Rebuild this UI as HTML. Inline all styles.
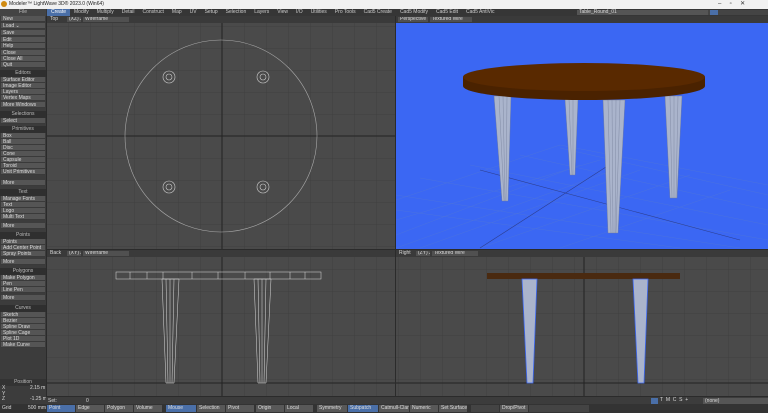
<!DOCTYPE html>
<html><head><meta charset="utf-8"><style>
*{margin:0;padding:0;box-sizing:border-box}
body{width:768px;height:413px;overflow:hidden;background:#2b2b2b;font-family:"Liberation Sans",sans-serif;font-size:5px;color:#d8d8d8;position:relative}
.a{position:absolute}
.t{position:absolute;white-space:nowrap;line-height:7px}
.btn{position:absolute;left:1px;width:44px;height:6px;background:#555;border-bottom:1px solid #3a3a3a;padding-left:2px;line-height:6px;color:#ddd;overflow:hidden;white-space:nowrap}
.hd{position:absolute;left:0;width:46px;height:7px;background:#2f2f2f;text-align:center;line-height:7px;color:#bbb}
.tab{display:inline-block;padding:0 4px;line-height:7px;color:#ccc}
.vh{position:absolute;height:7px;background:#3a3a3a;line-height:7px}
.dd{position:absolute;top:1px;height:5px;background:#505050;line-height:5px;padding-left:2px;overflow:hidden;white-space:nowrap}
.bb{position:absolute;top:405px;height:7px;background:#585858;line-height:7px;padding-left:2px;color:#ddd;overflow:hidden;white-space:nowrap}
</style></head><body>
<div class="a" style="left:0;top:0;width:768px;height:9px;background:#f1f1f1"></div>
<div class="a" style="left:1px;top:1px;width:6px;height:6px;border-radius:3px;background:#d08a10"></div>
<div class="t" style="left:9px;top:1px;color:#222;line-height:7px">Modeler™ LightWave 3D® 2023.0 (Win64)</div>
<div class="t" style="left:718px;top:1px;color:#333;font-size:6px">–&nbsp;&nbsp;&nbsp;&nbsp;&nbsp;▫&nbsp;&nbsp;&nbsp;&nbsp;&nbsp;✕</div>
<div class="a" style="left:0;top:9px;width:768px;height:7px;background:#363636"></div>
<div class="a" style="left:47px;top:9px;width:370px;height:7px;font-size:5px;white-space:nowrap">
<span class="tab" style="background:#4a6fa8;color:#fff">Create</span><span class="tab">Modify</span><span class="tab">Multiply</span><span class="tab">Detail</span><span class="tab">Construct</span><span class="tab">Map</span><span class="tab">UV</span><span class="tab">Setup</span><span class="tab">Selection</span><span class="tab">Layers</span><span class="tab">View</span><span class="tab">I/O</span><span class="tab">Utilities</span><span class="tab">Pro Tools</span><span class="tab">Cad5 Create</span><span class="tab">Cad5 Modify</span><span class="tab">Cad5 Edit</span><span class="tab">Cad5 AntiVic</span></div>
<div class="a" style="left:577px;top:10px;width:140px;height:5px;background:#555;line-height:5px;padding-left:2px">Table_Round_01</div>
<div class="a" style="left:708px;top:10px;width:60px;height:5px;background:#444"></div>
<div class="a" style="left:710px;top:10px;width:8px;height:5px;background:#4a6fa8"></div>
<div class="a" style="left:0;top:9px;width:46px;height:396px;background:#3c3c3c"></div>
<div class="hd" style="top:9px;background:#444">File</div>
<div class="btn" style="top:16px">New</div><div class="btn" style="top:23px">Load ⌄</div><div class="btn" style="top:30px">Save</div><div class="btn" style="top:37px">Edit</div><div class="btn" style="top:43px">Help</div>
<div class="btn" style="top:50px">Close</div><div class="btn" style="top:56px">Close All</div><div class="btn" style="top:62px">Quit</div>
<div class="hd" style="top:70px">Editors</div>
<div class="btn" style="top:77px">Surface Editor</div><div class="btn" style="top:83px">Image Editor</div><div class="btn" style="top:89px">Layers</div><div class="btn" style="top:95px">Vertex Maps</div><div class="btn" style="top:102px">More Windows</div>
<div class="hd" style="top:111px">Selections</div>
<div class="btn" style="top:118px">Select</div>
<div class="hd" style="top:126px">Primitives</div>
<div class="btn" style="top:133px">Box</div><div class="btn" style="top:139px">Ball</div><div class="btn" style="top:145px">Disc</div><div class="btn" style="top:151px">Cone</div><div class="btn" style="top:157px">Capsule</div><div class="btn" style="top:163px">Toroid</div><div class="btn" style="top:169px">Unit Primitives</div><div class="btn" style="top:180px">More</div>
<div class="hd" style="top:189px">Text</div>
<div class="btn" style="top:196px">Manage Fonts</div><div class="btn" style="top:202px">Text</div><div class="btn" style="top:208px">Logo</div><div class="btn" style="top:214px">Multi Text</div><div class="btn" style="top:223px">More</div>
<div class="hd" style="top:232px">Points</div>
<div class="btn" style="top:239px">Points</div><div class="btn" style="top:245px">Add Center Point</div><div class="btn" style="top:251px">Spray Points</div><div class="btn" style="top:259px">More</div>
<div class="hd" style="top:268px">Polygons</div>
<div class="btn" style="top:275px">Make Polygon</div><div class="btn" style="top:281px">Pen</div><div class="btn" style="top:287px">Line Pen</div><div class="btn" style="top:295px">More</div>
<div class="hd" style="top:305px">Curves</div>
<div class="btn" style="top:312px">Sketch</div><div class="btn" style="top:318px">Bezier</div><div class="btn" style="top:324px">Spline Draw</div><div class="btn" style="top:330px">Spline Cage</div><div class="btn" style="top:336px">Plot 1D</div><div class="btn" style="top:342px">Make Curve</div>
<div class="hd" style="top:379px;background:#333">Position</div>
<div class="t" style="left:2px;top:385px">X</div><div class="t" style="left:30px;top:385px">2.15 m</div>
<div class="t" style="left:2px;top:391px">Y</div>
<div class="t" style="left:2px;top:396px">Z</div><div class="t" style="left:30px;top:396px">-1.25 m</div>
<svg class="a" style="left:0;top:0" width="768" height="413">
<defs>
<pattern id="g" width="22" height="22" patternUnits="userSpaceOnUse" x="2" y="4"><path d="M0 0H22M0 0V22" stroke="#404040" stroke-width="1"/></pattern>
<pattern id="g2" width="22" height="22" patternUnits="userSpaceOnUse" x="2" y="5"><path d="M0 0H22M0 0V22" stroke="#404040" stroke-width="1"/></pattern>
</defs>
<rect x="47" y="23" width="348" height="226" fill="#4a4a4a"/><rect x="47" y="23" width="348" height="226" fill="url(#g)"/>
<line x1="222" y1="23" x2="222" y2="249" stroke="#222"/><line x1="47" y1="136" x2="395" y2="136" stroke="#222"/>
<circle cx="221" cy="136" r="96" fill="none" stroke="#aaa" stroke-width=".6"/>
<g fill="none" stroke="#ccc" stroke-width=".6">
<circle cx="169" cy="77" r="6"/><circle cx="169" cy="77" r="3"/><circle cx="263" cy="77" r="6"/><circle cx="263" cy="77" r="3"/>
<circle cx="169" cy="187" r="6"/><circle cx="169" cy="187" r="3"/><circle cx="263" cy="187" r="6"/><circle cx="263" cy="187" r="3"/></g>
<rect x="396" y="23" width="372" height="226" fill="#3b67f3"/>
<g stroke="#4a72e0" stroke-width=".5" fill="none">
<path d="M396 200L560 145 768 185M396 220L600 160M420 248L640 170 M480 248L690 175 M560 248L730 190 M396 235L580 165 M396 248L620 168"/>
<path d="M420 178L768 240M396 195L740 248M396 210L680 248M470 165L768 225M520 155L768 210M560 148L768 195"/>
</g>
<line x1="480" y1="170" x2="740" y2="240" stroke="#2d3f90" stroke-width=".6"/>
<line x1="620" y1="158" x2="480" y2="248" stroke="#2d3f90" stroke-width=".6"/>
<g fill="#aab4cc" stroke="#6f7a99" stroke-width=".4">
<path d="M494 96L511 96L508 201L502 201Z"/><path d="M565 99L578 99L575 175L570 175Z"/><path d="M603 100L625 100L618 233L608 233Z"/><path d="M665 96L682 96L677 198L670 198Z"/></g>
<g stroke="#77819c" stroke-width=".4">
<path d="M499 96L504 201M503 96L505 201M507 96L506 201"/><path d="M569 99L572 175M573 99L573 175"/><path d="M608 100L611 233M612 100L613 233M616 100L615 233M620 100L616 233"/><path d="M670 96L672 198M674 96L674 198M678 96L676 198"/></g>
<ellipse cx="584" cy="86" rx="121" ry="14" fill="#4a2200"/>
<rect x="463" y="77" width="242" height="9" fill="#4a2200"/>
<ellipse cx="584" cy="77" rx="121" ry="14" fill="#592900"/>
<rect x="47" y="257" width="348" height="139" fill="#4a4a4a"/><rect x="47" y="257" width="348" height="139" fill="url(#g2)"/>
<line x1="222" y1="257" x2="222" y2="396" stroke="#222"/><line x1="47" y1="383" x2="395" y2="383" stroke="#222"/>
<g fill="none" stroke="#ddd" stroke-width=".5">
<rect x="116" y="272" width="205" height="7"/><path d="M130 272v7M147 272v7M163 272v7M192 272v7M218 272v7M245 272v7M270 272v7M290 272v7M305 272v7"/>
<path d="M162 279L179 279L174 383L166 383ZM166 279L168 383M170 279L170 383M174 279L172 383"/>
<path d="M254 279L271 279L266 383L258 383ZM258 279L260 383M262 279L262 383M266 279L264 383"/></g>
<rect x="396" y="257" width="372" height="139" fill="#4a4a4a"/><rect x="396" y="257" width="372" height="139" fill="url(#g2)"/>
<line x1="584" y1="257" x2="584" y2="396" stroke="#222"/><line x1="396" y1="383" x2="768" y2="383" stroke="#222"/>
<rect x="487" y="273" width="193" height="6" fill="#4a2a10"/>
<g fill="#aab4cc" stroke="#3b67f3" stroke-width=".8">
<path d="M522 279L537 279L533 383L527 383Z"/><path d="M633 279L648 279L644 383L638 383Z"/></g>
</svg>
<div class="vh" style="left:47px;top:16px;width:348px"><div class="t" style="left:3px;top:0">Top</div><div class="dd" style="left:20px;width:14px">(XZ)⌄</div><div class="dd" style="left:36px;width:46px">Wireframe</div></div>
<div class="vh" style="left:396px;top:16px;width:372px"><div class="dd" style="left:2px;width:30px">Perspective</div><div class="dd" style="left:34px;width:42px">Textured Wire</div></div>
<div class="vh" style="left:47px;top:250px;width:348px"><div class="t" style="left:3px;top:0">Back</div><div class="dd" style="left:20px;width:14px">(XY)⌄</div><div class="dd" style="left:36px;width:46px">Wireframe</div></div>
<div class="vh" style="left:396px;top:250px;width:372px"><div class="t" style="left:3px;top:0">Right</div><div class="dd" style="left:20px;width:14px">(ZY)⌄</div><div class="dd" style="left:36px;width:46px">Textured Wire</div></div>
<div class="a" style="left:46px;top:397px;width:722px;height:8px;background:#3c3c3c"></div>
<div class="t" style="left:48px;top:398px">Set:</div><div class="t" style="left:86px;top:398px">0</div>
<div class="a" style="left:0;top:404px;width:768px;height:9px;background:#333"></div>
<div class="t" style="left:2px;top:405px">Grid</div><div class="t" style="left:28px;top:405px">500 mm</div>
<div class="bb" style="left:47px;width:28px;background:#4a6fa8">Point</div>
<div class="bb" style="left:76px;width:28px">Edge</div>
<div class="bb" style="left:105px;width:28px">Polygon</div>
<div class="bb" style="left:134px;width:28px">Volume</div>
<div class="bb" style="left:166px;width:30px;background:#4a6fa8">Mouse</div>
<div class="bb" style="left:197px;width:28px">Selection</div>
<div class="bb" style="left:226px;width:28px">Pivot</div>
<div class="bb" style="left:256px;width:28px">Origin</div>
<div class="bb" style="left:285px;width:28px">Local</div>
<div class="bb" style="left:317px;width:30px">Symmetry</div>
<div class="bb" style="left:348px;width:30px;background:#4a6fa8">Subpatch</div>
<div class="bb" style="left:379px;width:30px">Catmull-Clark</div>
<div class="bb" style="left:410px;width:28px">Numeric</div>
<div class="bb" style="left:439px;width:28px">Set Surface</div>
<div class="bb" style="left:471px;width:28px;background:#444"></div>
<div class="bb" style="left:500px;width:28px">Drop/Pivot</div>
<div class="bb" style="left:529px;width:60px;background:#444"></div>
<div class="a" style="left:651px;top:398px;width:7px;height:6px;background:#4a6fa8"></div>
<div class="t" style="left:660px;top:397px">T&nbsp;&nbsp;M&nbsp;&nbsp;C&nbsp;&nbsp;S&nbsp;&nbsp;+</div>
<div class="a" style="left:703px;top:398px;width:65px;height:6px;background:#555;line-height:6px;padding-left:2px">(none)</div>
</body></html>
